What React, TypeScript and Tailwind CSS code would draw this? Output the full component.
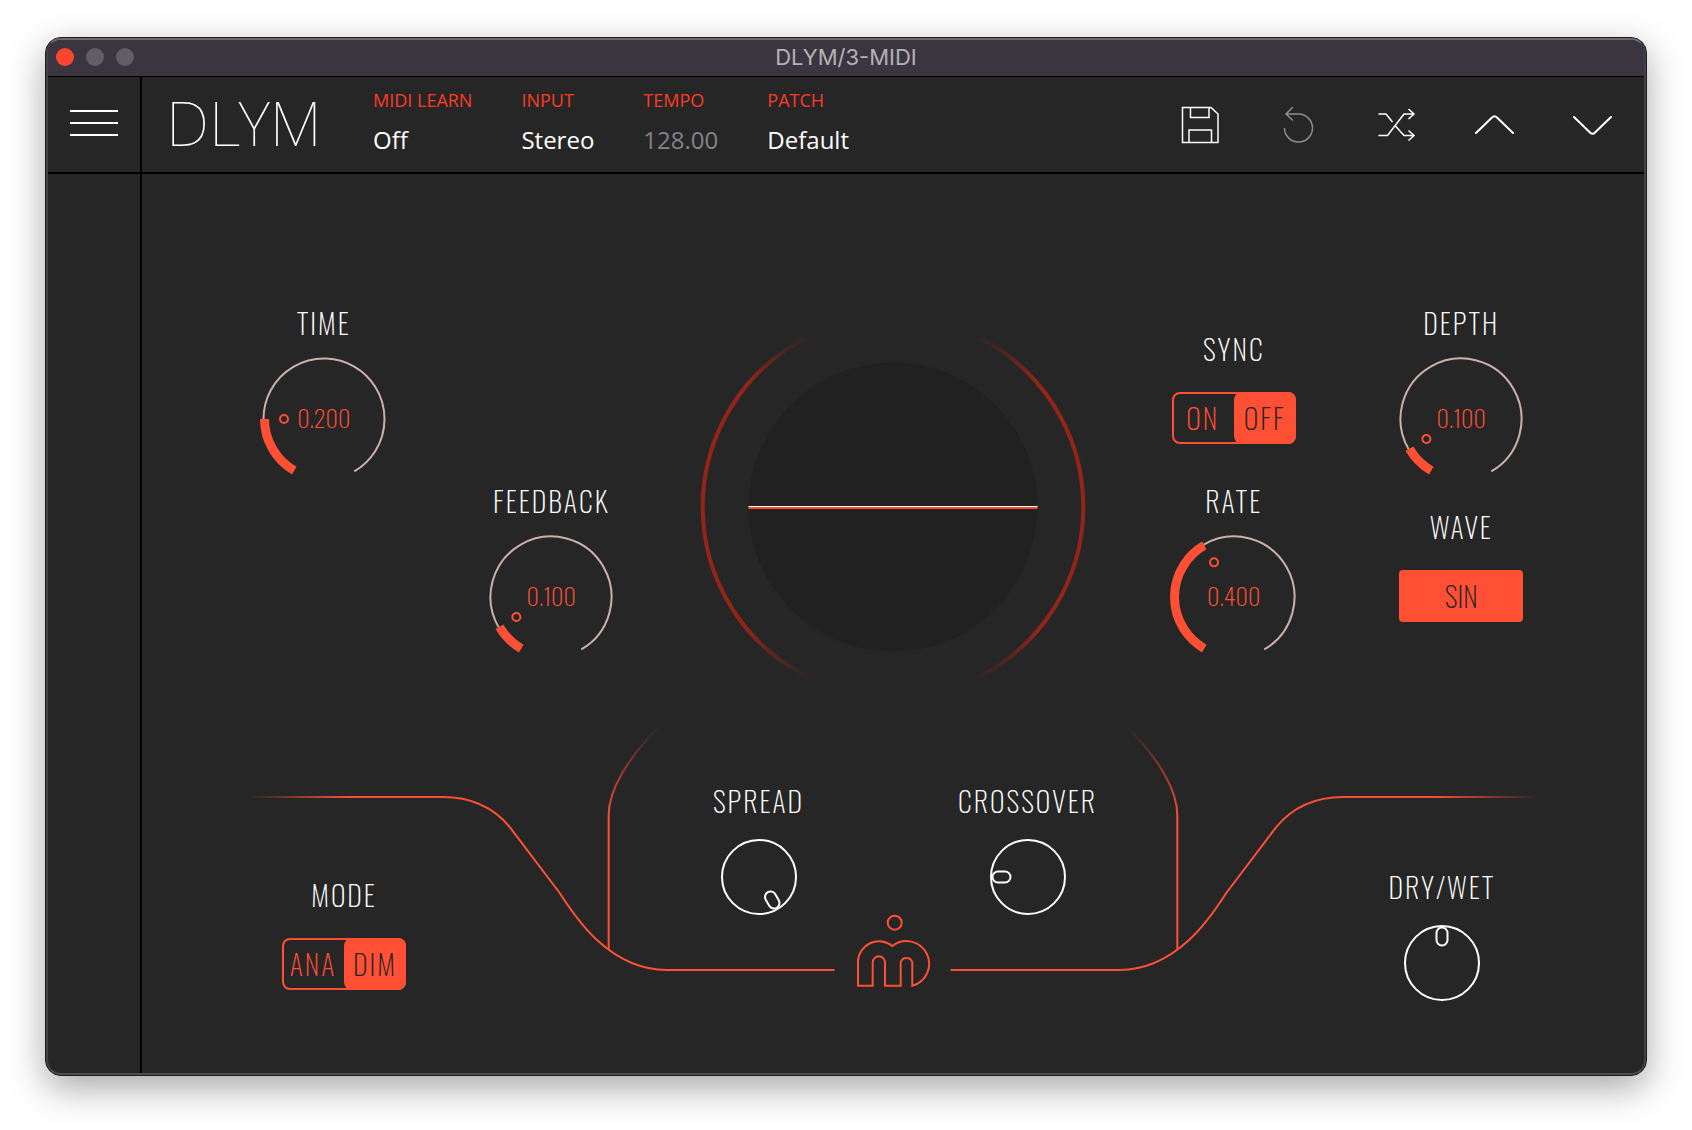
import React, { useState } from 'react'

const labelClass =
  "font-['Oswald','Roboto_Condensed',sans-serif] font-extralight text-[28px] leading-8 tracking-[2px] text-white whitespace-nowrap"

// point on a circle, angle in degrees clockwise from straight down
const polar = (c: number, r: number, angle: number) => {
  const a = (angle * Math.PI) / 180
  return [c - r * Math.sin(a), c + r * Math.cos(a)]
}

const arc = (c: number, r: number, from: number, to: number) => {
  const [x1, y1] = polar(c, r, from)
  const [x2, y2] = polar(c, r, to)
  return `M${x1} ${y1}A${r} ${r} 0 ${to - from > 180 ? 1 : 0} 1 ${x2} ${y2}`
}

const RingKnob = ({ label, initial }: { label: string; initial: number }) => {
  const [value, setValue] = useState(initial)
  const angle = 30 + value * 300
  const [dx, dy] = polar(64, 40, angle)
  return (
    <label className="relative flex flex-col items-center gap-4 cursor-pointer">
      <span className={labelClass}>{label}</span>
      <input
        type="range"
        min={0}
        max={1}
        step={0.001}
        value={value}
        onChange={(e) => setValue(Number(e.target.value))}
        className="sr-only"
      />
      <span className="grid place-items-center size-32">
        <svg viewBox="0 0 128 128" fill="none" className="col-start-1 row-start-1 size-32">
          <path d={arc(64, 60.5, angle, 330)} stroke="#cdb0aa" strokeWidth="2" />
          <path d={arc(64, 59.5, 30, angle)} stroke="#ff4f35" strokeWidth="9" />
          <circle cx={dx} cy={dy} r="4" stroke="#ff4f35" strokeWidth="2" />
        </svg>
        <span className="col-start-1 row-start-1 pb-[5px] font-['Oswald','Roboto_Condensed',sans-serif] font-extralight text-2xl text-[#ff4f35]">
          {value.toFixed(3)}
        </span>
      </span>
    </label>
  )
}

const DotKnob = ({ label, initial }: { label: string; initial: number }) => {
  const [value, setValue] = useState(initial)
  return (
    <label className="relative flex flex-col items-center gap-5 w-[124px] cursor-pointer">
      <span className={labelClass}>{label}</span>
      <input
        type="range"
        min={0}
        max={1}
        step={0.01}
        value={value}
        onChange={(e) => setValue(Number(e.target.value))}
        className="sr-only"
      />
      <svg viewBox="0 0 80 80" fill="none" stroke="#fff" strokeWidth="2" className="size-20">
        <circle cx="40" cy="40" r="37" />
        <rect
          x="34.5"
          y="4.5"
          width="11"
          height="18"
          rx="5.5"
          transform={`rotate(${(value - 0.5) * 300} 40 40)`}
        />
      </svg>
    </label>
  )
}

const Toggle = ({ label, options }: { label: string; options: string[] }) => {
  const [picked, setPicked] = useState(options[1])
  return (
    <fieldset className="relative w-[124px]">
      <legend className={`${labelClass} mx-auto mb-[27px]`}>{label}</legend>
      <div className="flex w-full h-[52px] rounded-lg shadow-[inset_0_0_0_2px_#ff4f35]">
        {options.map((option) => (
          <label
            key={option}
            className="flex flex-1 items-center justify-center rounded-lg cursor-pointer font-['Oswald','Roboto_Condensed',sans-serif] font-extralight text-[28px] leading-8 tracking-[2px] text-[#ff4f35] has-checked:bg-[#ff4f35] has-checked:text-[#262626]"
          >
            <input
              type="radio"
              name={label}
              checked={picked === option}
              onChange={() => setPicked(option)}
              className="sr-only"
            />
            {option}
          </label>
        ))}
      </div>
    </fieldset>
  )
}

const WaveButton = () => (
  <div className="flex flex-col items-center gap-[27px] w-[124px]">
    <span id="wave" className={labelClass}>WAVE</span>
    <button
      aria-describedby="wave"
      className="w-full h-[52px] rounded bg-[#ff4f35] font-['Oswald','Roboto_Condensed',sans-serif] font-extralight text-[28px] leading-8 text-[#262626]"
    >
      SIN
    </button>
  </div>
)

const Scope = () => (
  <svg viewBox="0 0 400 360" fill="none" className="w-[400px] h-[360px] mt-5 justify-self-center">
    <defs>
      <linearGradient id="ring" gradientUnits="userSpaceOnUse" x1="0" y1="8" x2="0" y2="352">
        <stop offset="0" stopColor="#942418" stopOpacity="0" />
        <stop offset="0.14" stopColor="#942418" />
        <stop offset="0.86" stopColor="#942418" />
        <stop offset="1" stopColor="#942418" stopOpacity="0" />
      </linearGradient>
    </defs>
    <circle cx="200" cy="180" r="144.5" fill="#212121" />
    <path d="M119 8A190 190 0 0 0 119 352M281 8A190 190 0 0 1 281 352" stroke="url(#ring)" strokeWidth="4" />
    <path d="M55.500 181H344.500" stroke="#ff4a2e" strokeWidth="2" />
    <path d="M55.500 179.500H344.500" stroke="#fff" strokeWidth="1" />
  </svg>
)

const Contour = () => (
  <svg
    viewBox="0 0 1503 388"
    fill="none"
    strokeWidth="2"
    className="absolute inset-x-0 top-0 w-full h-[388px] pointer-events-none"
  >
    <defs>
      <linearGradient id="fadeX" gradientUnits="userSpaceOnUse" x1="106" y1="0" x2="1397" y2="0">
        <stop offset="0" stopColor="#ff4f35" stopOpacity="0" />
        <stop offset="0.08" stopColor="#ff4f35" />
        <stop offset="0.92" stopColor="#ff4f35" />
        <stop offset="1" stopColor="#ff4f35" stopOpacity="0" />
      </linearGradient>
      <linearGradient id="fadeY" gradientUnits="userSpaceOnUse" x1="0" y1="38" x2="0" y2="130">
        <stop offset="0" stopColor="#ff4f35" stopOpacity="0" />
        <stop offset="1" stopColor="#ff4f35" />
      </linearGradient>
    </defs>
    <g stroke="url(#fadeX)">
      <path d="M106 110H301C331 110 353 122 368 140L418 206C434 231 468 283 525 283H693" />
      <path d="M1397 110H1202C1172 110 1150 122 1135 140L1085 206C1069 231 1035 283 978 283H809" />
    </g>
    <g stroke="url(#fadeY)">
      <path d="M467 262V128C467 104 485 72 517 40" />
      <path d="M1036 262V128C1036 104 1018 72 986 40" />
    </g>
  </svg>
)

const BrandMark = () => (
  <svg viewBox="0 0 76 76" fill="none" stroke="#ff4f35" strokeWidth="2" className="size-[76px] -mt-1">
    <circle cx="39.700" cy="9.700" r="7" />
    <path d="M3 72.700V48A21 21 0 0 1 37.300 33A22.700 22.700 0 1 1 57.300 72.700V49.500A6 6 0 0 0 45.700 49.500V72.700H30V49.500A6 6 0 0 0 17.700 49.500V72.700Z" />
  </svg>
)

const Field = ({ label, children }: { label: string; children: React.ReactNode }) => (
  <label className="flex flex-col gap-3">
    <span className="text-lg leading-6 text-[#ff3b22]">{label}</span>
    {children}
  </label>
)

const fieldClass =
  'appearance-none bg-transparent outline-none field-sizing-content text-2xl leading-8 text-white'

const IconButton = ({ label, children }: { label: string; children: React.ReactNode }) => (
  <button aria-label={label} className="flex items-center justify-center w-[98px] h-full">
    <svg viewBox="0 0 40 40" fill="none" stroke="#fff" className="size-10">
      {children}
    </svg>
  </button>
)

const Header = () => (
  <header className="flex flex-1 items-center h-[95px] pl-6 pr-[3px] font-['Open_Sans','Noto_Sans',sans-serif]">
    <h1 className="font-['Noto_Sans',sans-serif] font-thin text-[62px] leading-none text-white w-[207px] pb-[6px]">
      DLYM
    </h1>
    <div className="flex gap-[49px] pb-[6px]">
      <Field label="MIDI LEARN">
        <select className={fieldClass}>
          <option>Off</option>
        </select>
      </Field>
      <Field label="INPUT">
        <select className={fieldClass}>
          <option>Stereo</option>
        </select>
      </Field>
      <Field label="TEMPO">
        <input defaultValue="128.00" className="bg-transparent outline-none w-[75px] text-2xl leading-8 text-[#84828a]" />
      </Field>
      <Field label="PATCH">
        <select className={fieldClass}>
          <option>Default</option>
        </select>
      </Field>
    </div>
    <nav className="flex h-full ml-auto">
      <IconButton label="Save patch">
        <g strokeWidth="1.500">
          <path d="M2.500 2.500H31L38 9V37.500H2.500Z" />
          <path d="M10.500 2.500V12.500H29V2.500M9 37.500V25H31.500V37.500" />
        </g>
      </IconButton>
      <IconButton label="Undo">
        <path d="M6.500 23A14 14 0 1 0 20.500 9H8M15 2L8 9L15 15.500" stroke="#8c8c8c" strokeWidth="1.500" />
      </IconButton>
      <IconButton label="Randomize">
        <path
          d="M2.500 9H10L16.500 17M2.500 30.500H11.500L28 9H38M19 20.500L28 30.500H38M32.500 4L38 9L32.500 14M32.500 25.500L38 30.500L32.500 35.500"
          strokeWidth="1.500"
        />
      </IconButton>
      <IconButton label="Previous patch">
        <path d="M2 28L18 12.500Q20.500 10 23 12.500L39 28" strokeWidth="2" strokeLinecap="round" />
      </IconButton>
      <IconButton label="Next patch">
        <path d="M2 12L18 27.500Q20.500 30 23 27.500L39 12" strokeWidth="2" strokeLinecap="round" />
      </IconButton>
    </nav>
  </header>
)

const TitleBar = () => (
  <div className="grid grid-cols-3 items-center h-[37px] px-2 pb-[3px] bg-[#3b3540] border-b border-black">
    <div className="flex gap-3">
      <button aria-label="Close" className="size-[18px] rounded-full bg-[#ff4530]" />
      <button aria-label="Minimize" className="size-[18px] rounded-full bg-[#625e65]" />
      <button aria-label="Zoom" className="size-[18px] rounded-full bg-[#625e65]" />
    </div>
    <p className="text-center font-['Inter',sans-serif] text-[22px] leading-none text-[#b4b2b6]">DLYM/3-MIDI</p>
  </div>
)

const App = () => {
  return (
    <div className="bg-white px-[45px] pt-[37px] pb-[53px]">
      <div className="rounded-2xl border border-[#1c1c1c] bg-[#262626] shadow-[0_12px_36px_rgba(0,0,0,0.35)]">
        <div className="rounded-[15px] border-2 border-t-[#6c696f] border-x-[#424143] border-b-[#4d4d4d] overflow-hidden">
          <TitleBar />
          <div className="flex items-center border-b-2 border-black">
            <div className="flex items-center justify-center w-[94px] h-[95px] border-r-2 border-black">
              <button aria-label="Menu" className="flex flex-col gap-[10px] w-12 mb-1">
                <span className="w-full h-[2px] bg-white" />
                <span className="w-full h-[2px] bg-white" />
                <span className="w-full h-[2px] bg-white" />
              </button>
            </div>
            <Header />
          </div>

          <div className="flex">
            <aside className="w-[94px] shrink-0 border-r-2 border-black" />
            <main className="flex-1 min-w-0">
              <section className="grid grid-cols-[1fr_1fr_2fr_1fr_1fr] justify-items-center pl-[68px] pr-[69px] pt-[133px]">
                <RingKnob label="TIME" initial={0.2} />
                <div className="pt-[178px]">
                  <RingKnob label="FEEDBACK" initial={0.1} />
                </div>
                <Scope />
                <div className="flex flex-col items-center gap-[41px] pt-[26px]">
                  <Toggle label="SYNC" options={['ON', 'OFF']} />
                  <RingKnob label="RATE" initial={0.4} />
                </div>
                <div className="flex flex-col items-center gap-7">
                  <RingKnob label="DEPTH" initial={0.1} />
                  <WaveButton />
                </div>
              </section>

              <section className="relative flex justify-between items-start px-[140px] pb-[70px]">
                <Contour />
                <div className="pt-[192px]">
                  <Toggle label="MODE" options={['ANA', 'DIM']} />
                </div>
                <div className="flex flex-col items-center pt-[98px]">
                  <div className="flex gap-[145px]">
                    <DotKnob label="SPREAD" initial={1} />
                    <DotKnob label="CROSSOVER" initial={0.2} />
                  </div>
                  <BrandMark />
                </div>
                <div className="pt-[184px]">
                  <DotKnob label="DRY/WET" initial={0.5} />
                </div>
              </section>
            </main>
          </div>
        </div>
      </div>
    </div>
  )
}

export default App
